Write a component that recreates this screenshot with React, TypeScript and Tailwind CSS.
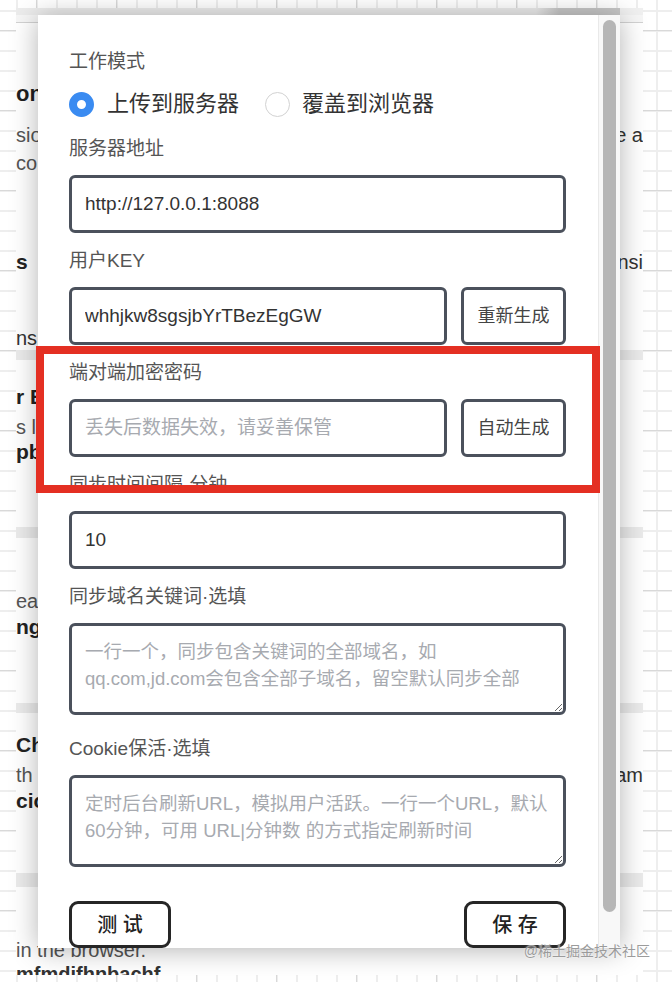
import React from 'react'

// 背景页面的一行碎片文字（被弹窗盖住，只露出两边）
function PageRow({
  left,
  right,
  leftClass = '',
  rightClass = '',
  className = '',
}: {
  left?: string
  right?: string
  leftClass?: string
  rightClass?: string
  className?: string
}) {
  return (
    <div className={`flex h-[24px] shrink-0 items-center justify-between whitespace-nowrap leading-[24px] ${className}`}>
      <span className={leftClass}>{left}</span>
      <span className={rightClass}>{right}</span>
    </div>
  )
}

function BackgroundPage() {
  const bold = 'text-[21px] font-bold text-[#222]'
  const normal = 'text-[20px] text-[#555]'
  return (
    <div className="flex h-[967px] w-[627px] flex-col overflow-hidden bg-white">
      {/* 浏览器工具栏底边 */}
      <div className="flex h-[7px] shrink-0">
        <div className="flex-1 bg-[#ececec]" />
        <div className="w-[23px] bg-linear-to-r from-[#ececec] to-[#c7c7c7]" />
        <div className="w-[61px] bg-[#c7c7c7]" />
        <div className="w-[23px] bg-[#f0f0f0]" />
      </div>
      <div className="h-[7px] shrink-0 bg-[#f6f6f6]" />
      <div className="h-px shrink-0 bg-[#d2d2d2]" />

      {/* 卡片 1 */}
      <div className="flex h-[327px] shrink-0 flex-col">
        <PageRow className="mt-[59px]" left="on" leftClass="text-[22px] font-bold text-[#1f1f1f]" />
        <PageRow className="mt-[17px]" left="sio" leftClass={normal} right="e a" rightClass="text-[20px] text-[#333]" />
        <PageRow className="mt-[4px]" left="co" leftClass={normal} />
        <PageRow className="mt-[75px]" left="s" leftClass={bold} right="nsi" rightClass="text-[20px] text-[#333]" />
        <PageRow className="mt-[52px]" left="ns" leftClass="text-[20px] text-[#333]" />
      </div>
      <div className="h-[10px] shrink-0 bg-[#ebebeb]" />

      {/* 卡片 2 */}
      <div className="flex h-[167px] shrink-0 flex-col">
        <PageRow className="mt-[25px]" left="r E" leftClass={bold} />
        <PageRow className="mt-[6px]" left="s l" leftClass={normal} />
        <PageRow className="mt-[1px]" left="pb" leftClass={bold} />
      </div>
      <div className="h-[11px] shrink-0 bg-[#ebebeb]" />

      {/* 卡片 3 */}
      <div className="flex h-[165px] shrink-0 flex-col">
        <PageRow className="mt-[51px]" left="ea" leftClass={normal} />
        <PageRow className="mt-[2px]" left="ng" leftClass={bold} />
      </div>
      <div className="h-[10px] shrink-0 bg-[#ebebeb]" />

      {/* 卡片 4 */}
      <div className="flex h-[160px] shrink-0 flex-col">
        <PageRow className="mt-[20px]" left="Ch" leftClass={bold} />
        <PageRow className="mt-[6px]" left="th" leftClass={normal} right="am" rightClass="text-[20px] text-[#333]" />
        <PageRow className="mt-[2px]" left="cic" leftClass={bold} />
      </div>
      <div className="h-[14px] shrink-0 bg-[#ebebeb]" />

      {/* 卡片 5 */}
      <div className="flex flex-col">
        <PageRow className="mt-[51px]" left="in the browser." leftClass={normal} />
        <PageRow left="mfmdifhnbachf" leftClass="text-[20px] font-bold text-[#333]" />
      </div>
    </div>
  )
}

const labelCls = 'h-[24px] text-[19px] leading-[24px] text-[#555]'
const inputCls =
  'block h-[58px] w-full rounded-[6px] border-[3px] border-[#4b515c] bg-white pl-[13px] pr-3 text-[19px] text-[#333] outline-none placeholder:text-[#a7aab0]'
const sideBtnCls =
  'h-[58px] w-[105px] shrink-0 rounded-[6px] border-[3px] border-[#4b515c] bg-white text-[18px] text-[#444]'
const textareaCls =
  'block h-[92px] w-full rounded-[6px] border-[3px] border-[#4b515c] bg-white pl-[13px] pr-[6px] pt-[12px] text-[18.5px] leading-[27px] text-[#333] outline-none placeholder:text-[#a7aab0]'
const bottomBtnCls =
  'h-[47px] w-[102px] rounded-[9px] border-[3px] border-[#262626] bg-white text-[20px] font-medium text-[#222]'

function Popup() {
  return (
    <div className="absolute left-[38px] top-[15px] flex h-[933px] w-[582px] overflow-hidden bg-white shadow-[0_2px_26px_rgba(0,0,0,0.3)]">
      <div className="w-[560px] shrink-0 pl-[31px] pr-[32px] pt-[35px]">
        <div className={labelCls}>工作模式</div>

        {/* 工作模式单选 */}
        <div className="mt-[17px] flex h-[26px] items-center">
          <span className="h-[25px] w-[25px] shrink-0 rounded-full border-[8px] border-[#3a8bf1] bg-white" />
          <span className="ml-[13px] text-[22px] leading-[26px] text-[#333]">上传到服务器</span>
          <span className="ml-[26px] h-[25px] w-[25px] shrink-0 rounded-full border border-[#d2d2d2] bg-white" />
          <span className="ml-[12px] text-[22px] leading-[26px] text-[#333]">覆盖到浏览器</span>
        </div>

        <div className="mt-[20px]">
          <div className={labelCls}>服务器地址</div>
          <input className={`mt-[14px] ${inputCls}`} defaultValue="http://127.0.0.1:8088" />
        </div>

        <div className="mt-[16px]">
          <div className={labelCls}>用户KEY</div>
          <div className="mt-[14px] flex gap-[14px]">
            <input className={inputCls} defaultValue="whhjkw8sgsjbYrTBezEgGW" />
            <button className={sideBtnCls}>重新生成</button>
          </div>
        </div>

        <div className="mt-[16px]">
          <div className={labelCls}>端对端加密密码</div>
          <div className="mt-[14px] flex gap-[14px]">
            <input className={inputCls} placeholder="丢失后数据失效，请妥善保管" />
            <button className={sideBtnCls}>自动生成</button>
          </div>
        </div>

        <div className="mt-[16px]">
          <div className={labelCls}>同步时间间隔·分钟</div>
          <input className={`mt-[14px] ${inputCls}`} defaultValue="10" />
        </div>

        <div className="mt-[16px]">
          <div className={labelCls}>同步域名关键词·选填</div>
          <textarea
            className={`mt-[14px] ${textareaCls}`}
            placeholder={'一行一个，同步包含关键词的全部域名，如\nqq.com,jd.com会包含全部子域名，留空默认同步全部'}
          />
        </div>

        <div className="mt-[22px]">
          <div className={labelCls}>Cookie保活·选填</div>
          <textarea
            className={`mt-[14px] ${textareaCls}`}
            placeholder={'定时后台刷新URL，模拟用户活跃。一行一个URL，默认\n60分钟，可用 URL|分钟数 的方式指定刷新时间'}
          />
        </div>

        <div className="mt-[34px] flex justify-between">
          <button className={bottomBtnCls}>测 试</button>
          <button className={bottomBtnCls}>保 存</button>
        </div>
      </div>

      {/* 滚动条 */}
      <div className="flex w-[22px] shrink-0 flex-col border-l border-[#e9e9e9] bg-[#f8f8f8] pl-[4px] pt-[5px]">
        <div className="h-[892px] w-[13px] rounded-full bg-[#b6b6b6]" />
      </div>
    </div>
  )
}

export default function App() {
  return (
    <div className="relative h-[982px] w-[672px] overflow-hidden bg-white bg-[linear-gradient(to_right,#d9d9d9_1px,transparent_1px),linear-gradient(to_bottom,#d9d9d9_1px,transparent_1px),linear-gradient(to_right,#eeeeee_2px,transparent_2px),linear-gradient(to_bottom,#eeeeee_2px,transparent_2px)] bg-size-[80px_80px,80px_80px,20px_20px,20px_20px] bg-position-[36px_30px,36px_30px,16px_10px,16px_10px] pl-[16px] pt-[8px] font-[family-name:'Liberation_Sans','Noto_Sans_CJK_SC',sans-serif]">
      <BackgroundPage />
      <Popup />

      {/* 红色标注框 */}
      <div className="pointer-events-none absolute left-[36px] top-[346px] h-[147px] w-[564px] border-[8px] border-[#e42f22]" />

      {/* 水印 */}
      <div className="absolute right-[22px] top-[942px] whitespace-nowrap text-[14px] leading-[18px] text-[#9b9b9b] [text-shadow:0_0_2px_#fff]">
        @稀土掘金技术社区
      </div>
    </div>
  )
}
